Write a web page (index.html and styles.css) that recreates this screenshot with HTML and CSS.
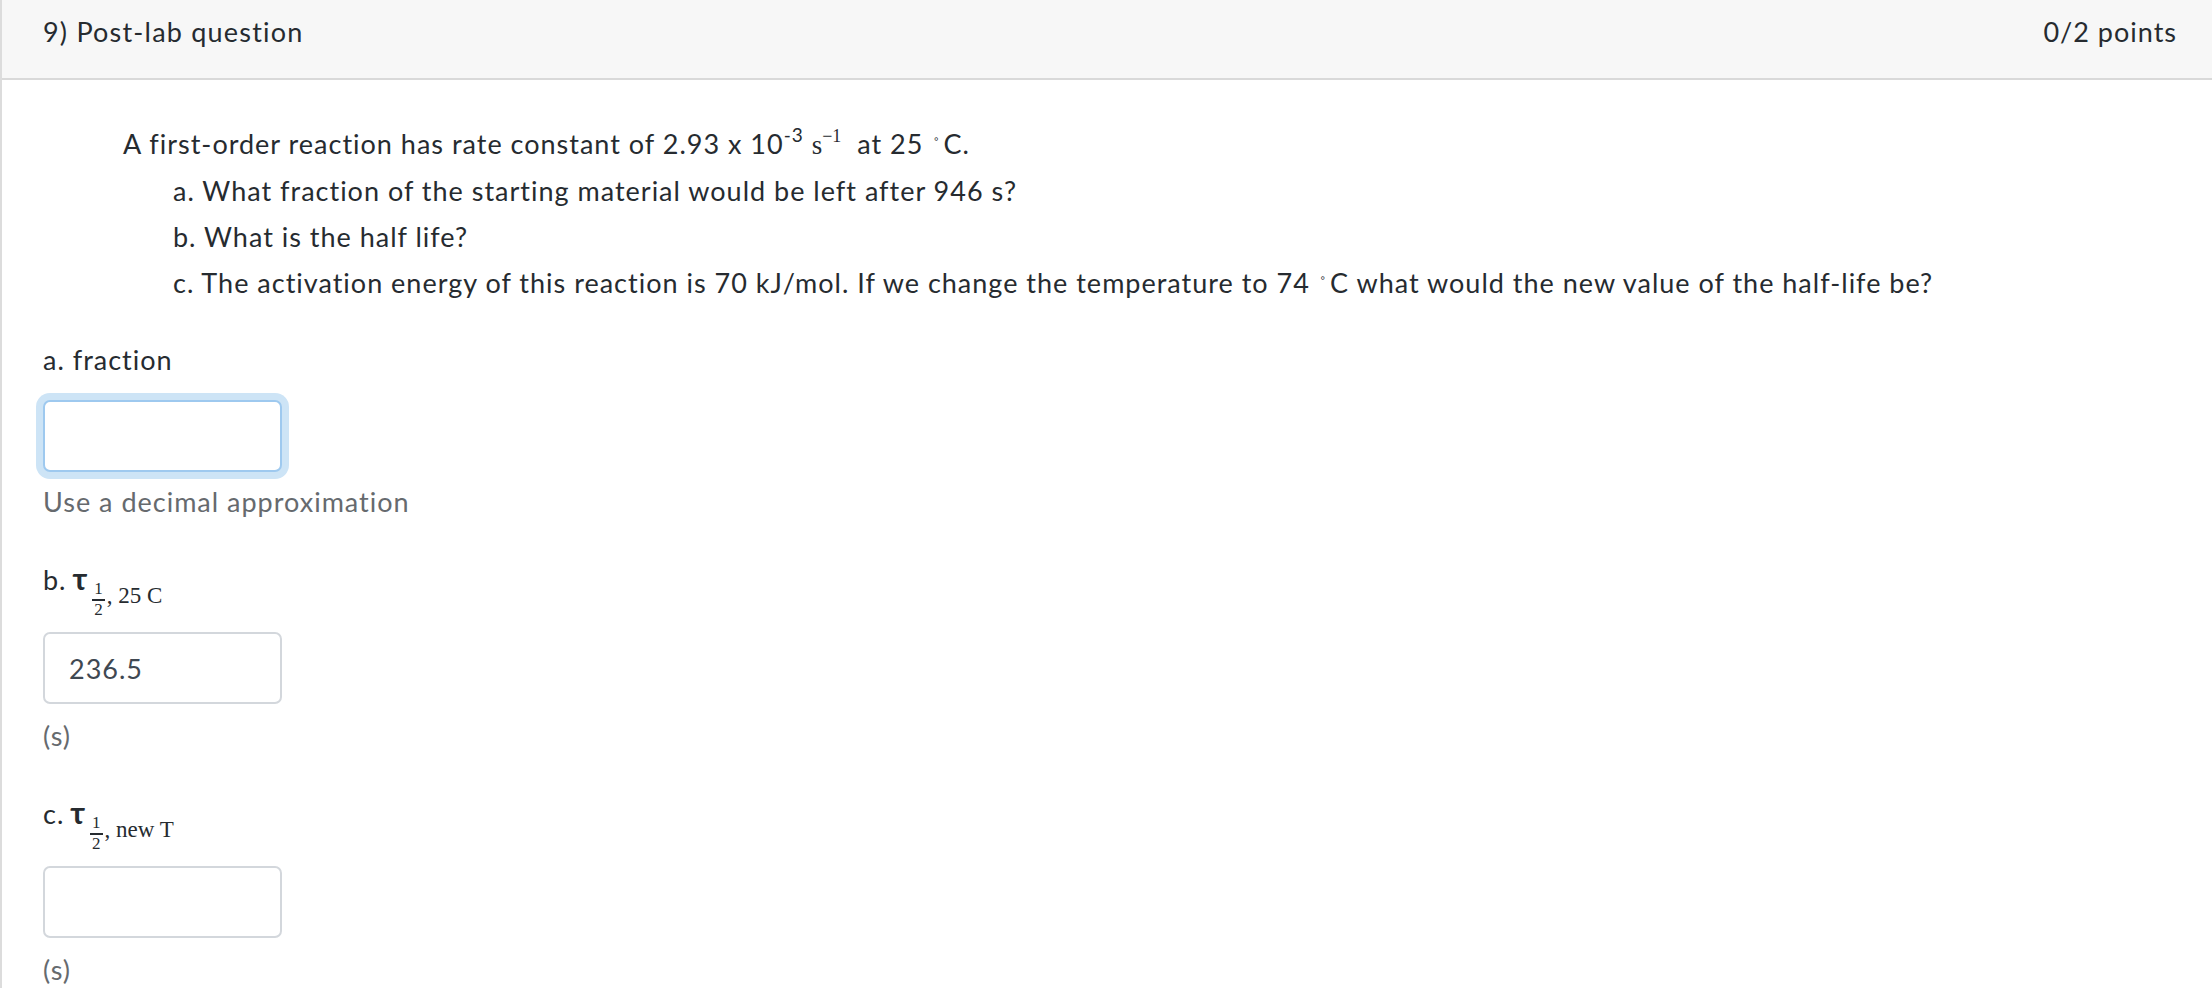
FILE: index.html
```html
<!DOCTYPE html>
<html lang="en">
<head>
<meta charset="utf-8">
<title>9) Post-lab question</title>
<link rel="stylesheet" href="styles.css">
</head>
<body>
<div class="card">
  <div class="head">
    <span class="title">9) Post-lab question</span>
    <span class="pts">0/2 points</span>
  </div>
  <div class="body">
    <div class="prompt">
      <p class="lead">A first-order reaction has rate constant of 2.93 x 10<sup class="exp">-3</sup> <span class="m">s<sup class="msup">−1</sup></span>&nbsp; at 25 <span class="deg">∘</span>C.</p>
      <p class="sub">a. What fraction of the starting material would be left after 946 s?</p>
      <p class="sub">b. What is the half life?</p>
      <p class="sub">c. The activation energy of this reaction is 70 kJ/mol. If we change the temperature to 74 <span class="deg">∘</span>C what would the new value of the half-life be?</p>
    </div>

    <div class="field first">
      <div class="label">a. fraction</div>
      <div class="box focus"></div>
      <div class="hint">Use a decimal approximation</div>
    </div>

    <div class="field">
      <div class="label">b. <span class="tau">τ</span><span class="sub-m"><span class="frac"><span class="num">1</span><span class="den">2</span></span><span class="m">, 25 C</span></span></div>
      <div class="box"><span class="val">236.5</span></div>
      <div class="hint">(s)</div>
    </div>

    <div class="field">
      <div class="label">c. <span class="tau">τ</span><span class="sub-m"><span class="frac"><span class="num">1</span><span class="den">2</span></span><span class="m">, new T</span></span></div>
      <div class="box"></div>
      <div class="hint">(s)</div>
    </div>
  </div>
</div>
</body>
</html>
```

FILE: styles.css
```css
html, body {
  margin: 0;
  padding: 0;
  background: #ffffff;
}

body {
  font-family: Lato, "Open Sans", sans-serif;
  color: #262b30;
  font-size: 27px;
  letter-spacing: 1px;
}

.card {
  border-left: 2px solid #dcdcdc;
  min-height: 988px;
  box-sizing: border-box;
}

.head {
  height: 80px;
  box-sizing: border-box;
  background: #f7f7f7;
  border-bottom: 2px solid #d9d9d9;
  display: flex;
  justify-content: space-between;
  align-items: flex-start;
  padding: 16px 35px 0 41px;
  line-height: 32px;
}

.title {
  letter-spacing: 1.2px;
}

.body {
  padding: 0 0 0 41px;
}

.prompt {
  padding: 41px 0 0 80px;
}

.prompt p {
  margin: 0;
  line-height: 46px;
}

.prompt .sub {
  padding-left: 50px;
}

.exp {
  font-size: 19px;
  vertical-align: 12px;
  line-height: 0;
}

.m {
  font-family: "Liberation Serif", "Times New Roman", serif;
  letter-spacing: 0;
}

.msup {
  font-size: 18px;
  vertical-align: 12px;
  line-height: 0;
}

.deg {
  font-family: "DejaVu Sans", sans-serif;
  font-size: 10px;
  vertical-align: 12px;
  line-height: 0;
  margin: 0 3px 0 2px;
}

.field {
  display: flex;
  flex-direction: column;
  align-items: flex-start;
  margin-top: 46px;
}

.field.first {
  margin-top: 38px;
}

.label {
  height: 32px;
  line-height: 32px;
  margin-bottom: 36px;
  white-space: nowrap;
}

.field.first .label {
  margin-bottom: 24px;
}

.tau {
  font-weight: 700;
  font-size: 31px;
  margin-left: -2px;
  line-height: 0;
}

.sub-m {
  vertical-align: -13px;
  line-height: 0;
}

.frac {
  display: inline-flex;
  flex-direction: column;
  align-items: center;
  font-family: "Liberation Serif", "Times New Roman", serif;
  font-size: 17px;
  letter-spacing: 0;
  margin: 0 2px 0 4px;
  vertical-align: 9px;
}

.frac .num {
  border-bottom: 2px solid #262b30;
  padding: 0 2px 3px;
  line-height: 14px;
}

.frac .den {
  line-height: 14px;
  padding-top: 2px;
}

.label .m {
  font-size: 23px;
}

.box {
  width: 239px;
  height: 72px;
  box-sizing: border-box;
  border: 2px solid #d3d7dc;
  border-radius: 7px;
  background: #fff;
  display: flex;
  align-items: center;
  padding-left: 24px;
}

.box.focus {
  border-color: #9ec9ef;
  box-shadow: 0 0 0 7px #cde4f6;
}

.val {
  color: #3f4852;
  font-size: 27px;
}

.hint {
  color: #666a6e;
  line-height: 32px;
  margin-top: 16px;
}

.field.first .hint {
  margin-top: 14px;
}
```
